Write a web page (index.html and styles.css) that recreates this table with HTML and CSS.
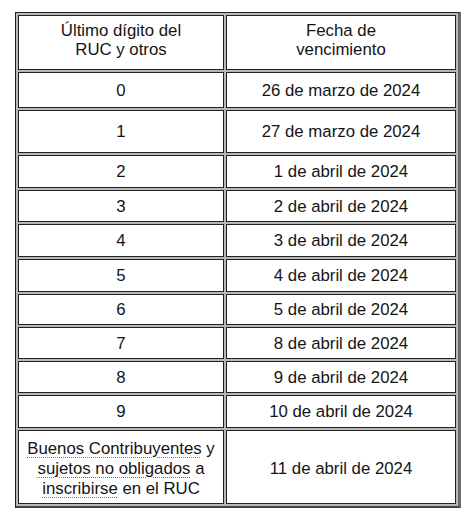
FILE: index.html
```html
<!DOCTYPE html>
<html lang="es">
<head>
<meta charset="utf-8">
<title>Cronograma</title>
<link rel="stylesheet" href="styles.css">
</head>
<body>
<table class="tbl">
  <tr class="r-head">
    <td class="c1">Último dígito del<br>RUC y otros</td>
    <td class="c2">Fecha de<br>vencimiento</td>
  </tr>
  <tr class="r-36"><td>0</td><td>26 de marzo de 2024</td></tr>
  <tr class="r-43"><td>1</td><td>27 de marzo de 2024</td></tr>
  <tr class="r-33"><td>2</td><td>1 de abril de 2024</td></tr>
  <tr class="r-32"><td>3</td><td>2 de abril de 2024</td></tr>
  <tr class="r-33"><td>4</td><td>3 de abril de 2024</td></tr>
  <tr class="r-33"><td>5</td><td>4 de abril de 2024</td></tr>
  <tr class="r-31"><td>6</td><td>5 de abril de 2024</td></tr>
  <tr class="r-32"><td>7</td><td>8 de abril de 2024</td></tr>
  <tr class="r-32"><td>8</td><td>9 de abril de 2024</td></tr>
  <tr class="r-33"><td>9</td><td>10 de abril de 2024</td></tr>
  <tr class="r-last">
    <td><span class="dot">Buenos Contribuyentes</span> y<br><span class="dot">sujetos no obligados</span> a<br><span class="dot">inscribirse</span> en el RUC</td>
    <td>11 de abril de 2024</td>
  </tr>
</table>
</body>
</html>
```
FILE: styles.css
```css
html, body {
  margin: 0;
  padding: 0;
  background: #ffffff;
}
body {
  padding: 12px 0 0 15px;
  font-family: "Liberation Sans", Arial, sans-serif;
  font-size: 16.8px;
  color: #141414;
}
.tbl {
  border-collapse: separate;
  border-spacing: 2px;
  border-top: 1px solid #222;
  border-left: 1px solid #222;
  border-right: 3px solid #6a6a6a;
  border-bottom: 2px solid #444;
  background: #b8b8b8;
}
.tbl td {
  border: 1px solid #222;
  background: #ffffff;
  box-sizing: border-box;
  text-align: center;
  vertical-align: middle;
  padding: 0 4px;
  line-height: 19px;
}
.tbl td:first-child { width: 206px; }
.tbl td:last-child { width: 230px; }
.r-head td { height: 55px; padding-bottom: 6px; }
.r-36 td { height: 36px; }
.r-43 td { height: 43px; }
.r-33 td { height: 33px; }
.r-32 td { height: 32px; }
.r-31 td { height: 31px; }
.r-last td { height: 74px; line-height: 20px; padding-top: 4px; }
.dot {
  text-decoration: underline dotted #7070b0;
  text-underline-offset: 3px;
  text-decoration-thickness: 1px;
}
```
